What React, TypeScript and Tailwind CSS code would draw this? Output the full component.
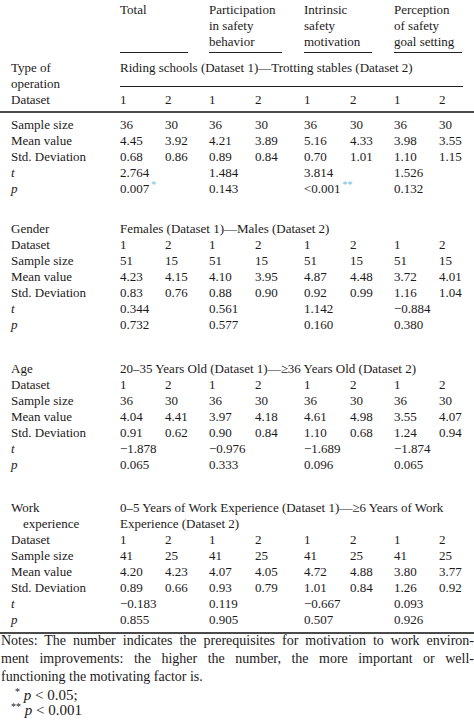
const grid = "grid grid-cols-[120px_45px_44px_46px_49px_46px_44px_45px_35px]";

type Section = {
  label: string[];
  group: string[];
  sample: string[];
  mean: string[];
  std: string[];
  t: string[];
  p: React.ReactNode[];
  lined?: boolean;
};

const Star = ({ n }: { n: string }) => (
  <sup className="ml-[2px] text-[10px] text-[#6cc0dc]">{n}</sup>
);

const sections: Section[] = [
  {
    label: ["Type of", "operation"],
    group: ["Riding schools (Dataset 1)—Trotting stables (Dataset 2)"],
    sample: ["36", "30", "36", "30", "36", "30", "36", "30"],
    mean: ["4.45", "3.92", "4.21", "3.89", "5.16", "4.33", "3.98", "3.55"],
    std: ["0.68", "0.86", "0.89", "0.84", "0.70", "1.01", "1.10", "1.15"],
    t: ["2.764", "1.484", "3.814", "1.526"],
    p: [
      <>0.007<Star n="*" /></>,
      "0.143",
      <>&lt;0.001<Star n="**" /></>,
      "0.132",
    ],
    lined: true,
  },
  {
    label: ["Gender"],
    group: ["Females (Dataset 1)—Males (Dataset 2)"],
    sample: ["51", "15", "51", "15", "51", "15", "51", "15"],
    mean: ["4.23", "4.15", "4.10", "3.95", "4.87", "4.48", "3.72", "4.01"],
    std: ["0.83", "0.76", "0.88", "0.90", "0.92", "0.99", "1.16", "1.04"],
    t: ["0.344", "0.561", "1.142", "−0.884"],
    p: ["0.732", "0.577", "0.160", "0.380"],
  },
  {
    label: ["Age"],
    group: ["20–35 Years Old (Dataset 1)—≥36 Years Old (Dataset 2)"],
    sample: ["36", "30", "36", "30", "36", "30", "36", "30"],
    mean: ["4.04", "4.41", "3.97", "4.18", "4.61", "4.98", "3.55", "4.07"],
    std: ["0.91", "0.62", "0.90", "0.84", "1.10", "0.68", "1.24", "0.94"],
    t: ["−1.878", "−0.976", "−1.689", "−1.874"],
    p: ["0.065", "0.333", "0.096", "0.065"],
  },
  {
    label: ["Work", "experience"],
    group: ["0–5 Years of Work Experience (Dataset 1)—≥6 Years of Work", "Experience (Dataset 2)"],
    sample: ["41", "25", "41", "25", "41", "25", "41", "25"],
    mean: ["4.20", "4.23", "4.07", "4.05", "4.72", "4.88", "3.80", "3.77"],
    std: ["0.89", "0.66", "0.93", "0.79", "1.01", "0.84", "1.26", "0.92"],
    t: ["−0.183", "0.119", "−0.667", "0.093"],
    p: ["0.855", "0.905", "0.507", "0.926"],
  },
];

const headers = [
  { lines: ["Total"], w: "w-[68px]" },
  { lines: ["Participation", "in safety", "behavior"], w: "w-[73px]" },
  { lines: ["Intrinsic", "safety", "motivation"], w: "w-[68px]" },
  { lines: ["Perception", "of safety", "goal setting"], w: "w-[68px]" },
];

function ValueRow({ label, values }: { label: string; values: string[] }) {
  return (
    <div className={`${grid} h-4`}>
      <div className="pl-[11px]">{label}</div>
      {values.map((v, i) => (
        <div key={i}>{v}</div>
      ))}
    </div>
  );
}

function PairRow({ label, values }: { label: string; values: React.ReactNode[] }) {
  return (
    <div className={`${grid} h-4`}>
      <div className="pl-[11px] italic">{label}</div>
      {values.map((v, i) => (
        <div key={i} className="col-span-2 whitespace-nowrap">
          {v}
        </div>
      ))}
    </div>
  );
}

function Block({ s, className }: { s: Section; className?: string }) {
  return (
    <div className={className}>
      <div className={grid}>
        <div className="pl-[11px]">
          {s.label.map((l, i) => (
            <div key={l} className={i > 0 && s.label[0] === "Work" ? "pl-3" : ""}>
              {l}
            </div>
          ))}
        </div>
        <div className="col-span-8">
          {s.lined ? (
            <div className="w-[343px] border-b border-[#222] pb-[10px] whitespace-nowrap">{s.group[0]}</div>
          ) : (
            s.group.map((g) => (
              <div key={g} className="whitespace-nowrap">
                {g}
              </div>
            ))
          )}
        </div>
      </div>
      <ValueRow label="Dataset" values={["1", "2", "1", "2", "1", "2", "1", "2"]} />
      {s.lined && <div className="mt-[3px] mb-[4px] h-[2px] bg-[#4a4a4a]" />}
      <ValueRow label="Sample size" values={s.sample} />
      <ValueRow label="Mean value" values={s.mean} />
      <ValueRow label="Std. Deviation" values={s.std} />
      <PairRow label="t" values={s.t} />
      <PairRow label="p" values={s.p} />
    </div>
  );
}

export default function App() {
  return (
    <div className="w-[474px] h-[723px] overflow-hidden bg-white text-[#1c1a1b] font-['Liberation_Serif',serif] text-[13px] leading-4">
      {/* column headings */}
      <div className={`${grid} pt-[2px]`}>
        <div />
        {headers.map((h) => (
          <div key={h.lines[0]} className="col-span-2">
            <div className={`${h.w} h-[51px] border-b border-[#222]`}>
              {h.lines.map((l) => (
                <div key={l} className="whitespace-nowrap">
                  {l}
                </div>
              ))}
            </div>
          </div>
        ))}
      </div>

      <Block s={sections[0]} className="mt-[7px]" />
      <Block s={sections[1]} className="mt-6" />
      <Block s={sections[2]} className="mt-[28px]" />
      <Block s={sections[3]} className="mt-[27px]" />

      <div className="mt-[4px] h-[2px] bg-[#4a4a4a]" />

      {/* notes */}
      <div className="-mt-[2px] text-[14px] leading-[18px] pl-[1px]">
        <div className="text-justify [text-align-last:justify]">
          Notes: The number indicates the prerequisites for motivation to work environ-
        </div>
        <div className="text-justify [text-align-last:justify]">
          ment improvements: the higher the number, the more important or well-
        </div>
        <div>functioning the motivating factor is.</div>
      </div>
      <div className="mt-[2px] text-[15px] leading-[15px]">
        <div className="pl-[15px]">
          <sup className="text-[10px]">*</sup> <span className="italic">p</span> &lt; 0.05;
        </div>
        <div className="pl-[11px]">
          <sup className="text-[10px]">**</sup> <span className="italic">p</span> &lt; 0.001
        </div>
      </div>
    </div>
  );
}
